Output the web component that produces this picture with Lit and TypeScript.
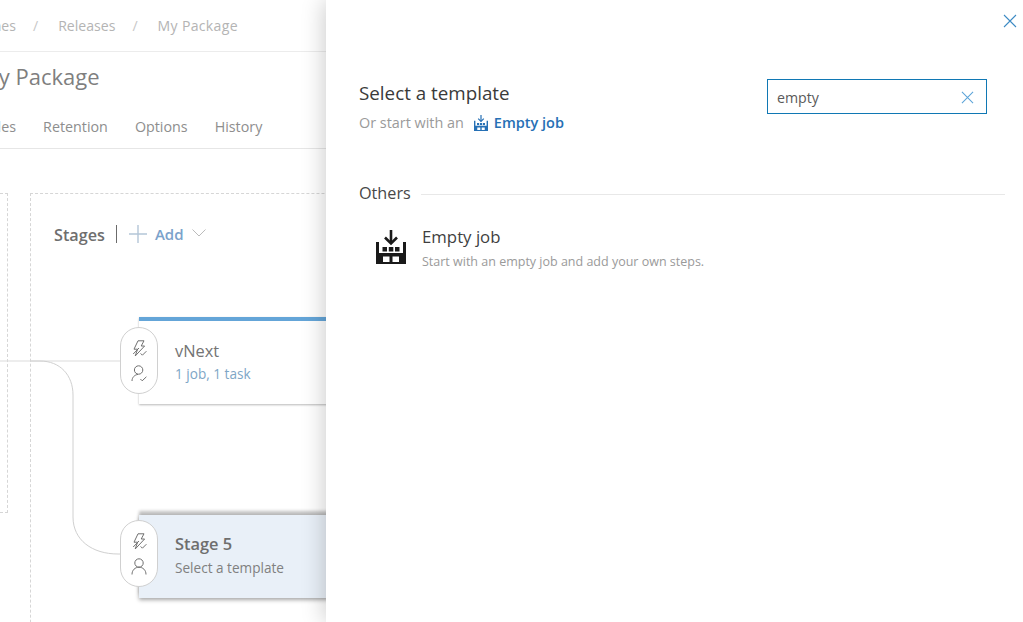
import { LitElement, html, css, svg } from "lit";
import { customElement } from "lit/decorators.js";

const bolt = svg`<path d="M7 0.8 H13 L10.2 6 H13.6 L4.2 16 L6.6 9.2 H3 Z" fill="none" stroke="#707070" stroke-width="1" stroke-linejoin="round"/><path d="M2.2 14 L8 8" stroke="#707070" stroke-width="1"/><path d="M9.6 13.4 L11.4 15.2 L15.4 11.2" fill="#fff" stroke="#707070" stroke-width="1"/>`;
const personCheck = svg`<circle cx="7.6" cy="5" r="4.2" fill="none" stroke="#707070" stroke-width="1"/><path d="M1 16 C1 12.4 3.6 9.8 7 9.4" fill="none" stroke="#707070" stroke-width="1"/><path d="M9.4 14 L11.2 15.8 L15.4 11.8" fill="none" stroke="#707070" stroke-width="1"/>`;
const person = svg`<circle cx="8" cy="5" r="4.2" fill="none" stroke="#707070" stroke-width="1"/><path d="M1 16.5 C1 12 4.2 9.2 8 9.2 C11.8 9.2 15 12 15 16.5" fill="none" stroke="#707070" stroke-width="1"/>`;
const factory = (c: string) => svg`<path d="M15 0 V13" stroke="${c}" stroke-width="2.6" fill="none"/><path d="M9 7.5 L15 13.5 L21 7.5" stroke="${c}" stroke-width="2.6" fill="none"/><path fill-rule="evenodd" fill="${c}" d="M0 12 H3 V23 H27 V12 H30 V34 H0 Z M7 26.5 V32 H13.5 V26.5 Z M16.5 26.5 V32 H23 V26.5 Z"/><rect x="6.5" y="17" width="4.5" height="4.5" fill="${c}"/><rect x="12.8" y="17" width="4.5" height="4.5" fill="${c}"/><rect x="19" y="17" width="4.5" height="4.5" fill="${c}"/>`;
const cross = (c: string) => svg`<path d="M1 1 L13 13 M13 1 L1 13" stroke="${c}" stroke-width="1.1" fill="none"/>`;

@customElement("app-root")
export class AppRoot extends LitElement {
  static styles = css`
    :host { display: block; width: 1023px; height: 622px; overflow: hidden; background: #fff; font-family: "Open Sans", "Noto Sans", sans-serif; }
    .page { display: grid; grid-template-columns: 326px 697px; height: 622px; }
    .left { display: flex; flex-direction: column; overflow: hidden; min-width: 0; }
    .crumbs { height: 52px; flex: none; box-sizing: border-box; display: flex; align-items: center; gap: 17px; margin-left: -43px; border-bottom: 1px solid #ececec; font-size: 14.1px; color: #b4b4b4; white-space: nowrap; }
    .crumbs .sep { color: #c8c8c8; margin-right: 3px; }
    .crumbs .last { letter-spacing: .3px; }
    .title { height: 50px; flex: none; box-sizing: border-box; padding-bottom: 2px; display: flex; align-items: center; margin-left: -21px; font-size: 22px; color: #7f7f7f; white-space: nowrap; }
    .tabs { height: 47px; flex: none; box-sizing: border-box; display: flex; align-items: center; gap: 27px; margin-left: -45px; padding-top: 3px; border-bottom: 1px solid #e6e6e6; font-size: 14.3px; color: #8e8e8e; white-space: nowrap; }
    .canvas { position: relative; flex: 1; }
    .box { position: absolute; border: 1px dashed #d6d6d6; box-sizing: border-box; }
    .box.a { left: -40px; top: 44px; width: 48px; height: 320px; }
    .box.b { left: 30px; top: 44px; width: 400px; height: 500px; padding: 27px 0 0 23px; }
    .stages { display: flex; align-items: center; height: 26px; }
    .stages b { font-weight: 600; font-size: 16.2px; color: #6e6e6e; margin-top: 2px; }
    .stages .bar { width: 1px; height: 18px; background: #6b6b6b; margin: 0 12px 0 11px; }
    .stages .add { font-weight: 600; font-size: 15px; color: #7ba2cb; margin: 0 9px 0 8px; }
    .stages .chev { margin-bottom: 2px; }
    .line { position: absolute; overflow: visible; left: 0; top: 0; }
    .card { position: absolute; left: 139px; width: 190px; box-sizing: border-box; padding-left: 36px; display: flex; flex-direction: column; }
    .card.one { top: 168px; height: 87px; padding-top: 18px; background: #fff; border-top: 4px solid #64a5d8; box-shadow: 0 1px 2px rgba(0,0,0,.28); }
    .card.two { top: 366px; height: 83px; padding-top: 17px; background: #e9f0f8; box-shadow: 0 -4px 3px rgba(0,0,0,.24), 0 2px 4px rgba(0,0,0,.35); }
    .name { font-size: 16.4px; line-height: 24px; color: #747474; }
    .two .name { font-weight: 600; color: #6e6e6e; }
    .sub { font-size: 13.6px; line-height: 22px; color: #7ea6c6; }
    .two .sub { color: #808080; margin-top: 1px; }
    .pill { position: absolute; left: 120px; width: 38px; height: 67px; box-sizing: border-box; border: 1px solid #d0d0d0; border-radius: 19px; background: #fff; display: flex; flex-direction: column; align-items: center; justify-content: center; gap: 8px; }
    .pill svg { width: 16px; height: 17px; display: block; }
    .panel { background: #fff; position: relative; box-shadow: -2px 0 22px rgba(0,0,0,.2); padding: 0 18px 0 33px; display: flex; flex-direction: column; box-sizing: border-box; }
    .close { align-self: flex-end; margin: 14px -12px 0 0; width: 14px; height: 14px; display: block; }
    .head { display: flex; justify-content: space-between; align-items: flex-start; margin-top: 51px; padding-right: 18px; }
    h1 { margin: 0; font-weight: 400; font-size: 18.8px; line-height: 28px; color: #3a3a3a; }
    .start { display: flex; align-items: center; margin-top: 6px; font-size: 14.4px; line-height: 20px; color: #9a9a9a; }
    .start svg { width: 14px; height: 16px; margin: 0 6px 0 10px; }
    .start b { font-weight: 600; font-size: 14.5px; color: #2670b5; }
    .search { width: 220px; height: 35px; box-sizing: border-box; border: 1.5px solid #1078b4; display: flex; align-items: center; justify-content: space-between; padding: 2px 12.5px 0 9px; font-size: 14.2px; color: #5a5a5a; }
    .search svg { width: 13px; height: 13px; }
    .group { display: flex; align-items: center; gap: 10px; margin-top: 48px; font-size: 16.2px; line-height: 24px; color: #484848; }
    .group i { flex: 1; height: 1px; background: #e8e8e8; margin-top: 2px; }
    .item { display: flex; margin: 20px 0 0 17px; gap: 16px; }
    .item svg { width: 30px; height: 34px; margin-top: 5px; flex: none; }
    .item .t { font-size: 16.8px; line-height: 24px; color: #3f3f3f; }
    .item .d { font-size: 12.5px; line-height: 20px; margin-top: 3px; color: #9a9a9a; }
  `;

  render() {
    return html`<div class="page">
      <div class="left">
        <div class="crumbs"><span>Pipelines</span><span class="sep">/</span><span>Releases</span><span class="sep">/</span><span class="last">My Package</span></div>
        <div class="title">My Package</div>
        <div class="tabs"><span>Variables</span><span>Retention</span><span>Options</span><span>History</span></div>
        <div class="canvas">
          <div class="box a"></div>
          <div class="box b">
            <div class="stages"><b>Stages</b><span class="bar"></span>
              <svg width="18" height="18" viewBox="0 0 18 18"><path d="M9 0 V18 M0 9 H18" stroke="#b4c6d8" stroke-width="1.4"/></svg>
              <span class="add">Add</span>
              <svg class="chev" width="14" height="8" viewBox="0 0 14 8"><path d="M0.5 0.5 L7 7 L13.5 0.5" stroke="#bbb" stroke-width="1" fill="none"/></svg>
            </div>
          </div>
          <svg class="line" width="326" height="473" viewBox="0 149 326 473">
            <path d="M0 361 H120" stroke="#dcdcdc" stroke-width="1.2" fill="none"/>
            <path d="M30 361 H40 C60 361 73 375 73 395 V517 C73 540 92 554 118 554 H120" stroke="#d0d0d0" stroke-width="1" fill="none"/>
          </svg>
          <div class="card one"><div class="name">vNext</div><div class="sub">1 job, 1 task</div></div>
          <div class="pill" style="top:178px"><svg viewBox="0 0 16 17">${bolt}</svg><svg viewBox="0 0 16 17">${personCheck}</svg></div>
          <div class="card two"><div class="name">Stage 5</div><div class="sub">Select a template</div></div>
          <div class="pill" style="top:371px"><svg viewBox="0 0 16 17">${bolt}</svg><svg viewBox="0 0 16 17">${person}</svg></div>
        </div>
      </div>
      <div class="panel">
        <svg class="close" viewBox="0 0 14 14">${cross("#3d8bc4")}</svg>
        <div class="head">
          <div>
            <h1>Select a template</h1>
            <div class="start">Or start with an <svg viewBox="0 0 30 34">${factory("#2670b5")}</svg><b>Empty job</b></div>
          </div>
          <div class="search"><span>empty</span><svg viewBox="0 0 14 14">${cross("#5aa3d8")}</svg></div>
        </div>
        <div class="group"><span>Others</span><i></i></div>
        <div class="item">
          <svg viewBox="0 0 30 34">${factory("#1a1a1a")}</svg>
          <div><div class="t">Empty job</div><div class="d">Start with an empty job and add your own steps.</div></div>
        </div>
      </div>
    </div>`;
  }
}
